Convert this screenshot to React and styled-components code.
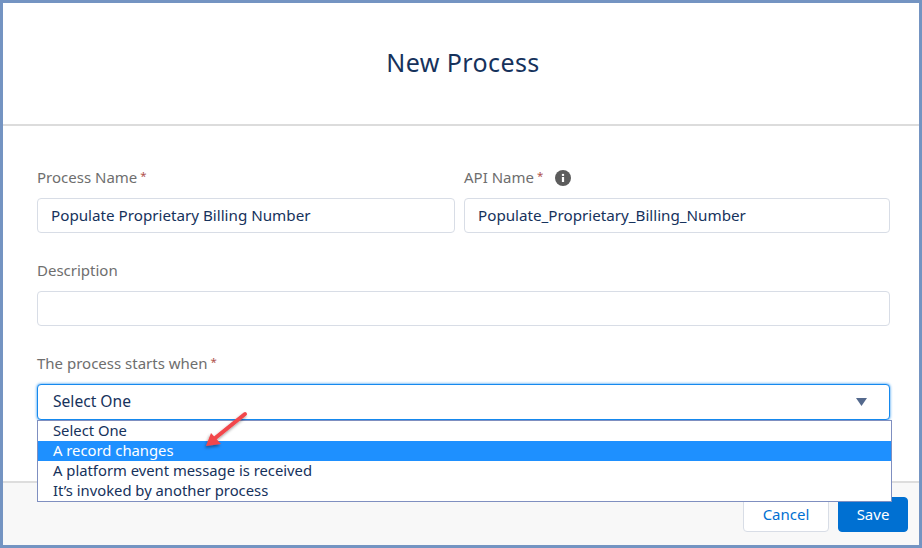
import React from 'react';
import styled, { createGlobalStyle } from 'styled-components';

const Global = createGlobalStyle`
  html, body { margin: 0; padding: 0; background: #7494c4; }
  body { font-family: "Noto Sans", "Open Sans", sans-serif; }
`;
const Frame = styled.div`
  width: 922px; height: 548px; box-sizing: border-box;
  border: 3px solid #7494c2; background: #fff;
  display: flex; flex-direction: column; position: relative; overflow: hidden;
`;
const Header = styled.header`
  height: 123px; flex: none; box-sizing: border-box; border-bottom: 2px solid #dcdcdc;
  display: flex; align-items: center; justify-content: center;
`;
const Title = styled.h1`
  margin: 0 0 3px 4px; font-size: 25px; font-weight: 400; color: #16325c; letter-spacing: 0.4px;
`;
const Body = styled.main`
  height: 355px; flex: none; box-sizing: border-box; padding: 41px 29px 0 34px;
  display: flex; flex-direction: column; position: relative;
`;
const Row = styled.div`
  display: grid; grid-template-columns: 418px 426px; column-gap: 9px; margin-bottom: 27px;
`;
const Field = styled.div`
  display: flex; flex-direction: column;
  margin-top: ${p => p.$gap || 0}px;
`;
const Label = styled.label`
  display: flex; align-items: center; height: 20px; margin-bottom: 11px;
  font-size: 15px; color: #6e6e6e;
`;
const Star = styled.span`
  color: #b0524e; margin-left: 3px; font-size: 11.5px; align-self: flex-start; line-height: 17px;
`;
const InfoIcon = styled.svg`
  width: 16px; height: 16px; margin: 2px 0 0 12px;
`;
const Input = styled.div`
  height: 35px; box-sizing: border-box; border: 1px solid #d8dde6; border-radius: 4px;
  padding: 0 13px 2px; display: flex; align-items: center; font-size: 15.2px; color: #16325c; background: #fff;
`;
const Select = styled(Input)`
  height: 36px; padding: 0 15px 2px; border-color: #1589ee; justify-content: space-between;
  box-shadow: 0 0 3px #1589ee; font-size: 15.6px;
`;
const Caret = styled.svg`
  width: 11px; height: 8px; margin: 2px 7px 0 0;
`;
const List = styled.ul`
  position: absolute; left: 34px; top: 294px; width: 855px; height: 82px; box-sizing: border-box;
  margin: 0; padding: 0; list-style: none; background: #fff; border: 1px solid #7f8fc0; z-index: 2;
`;
const Option = styled.li`
  height: 20px; line-height: 18px; padding-left: 15px; font-size: 14.8px;
  color: ${p => (p.$active ? '#fff' : '#16325c')};
  background: ${p => (p.$active ? '#1e90ff' : 'transparent')};
`;
const Footer = styled.footer`
  flex: 1; background: #f8f8f8; border-top: 2px solid #dddddd;
  display: flex; justify-content: flex-end; align-items: flex-start; gap: 9px; padding: 14px 11px 0 0;
`;
const Button = styled.button`
  height: 35px; box-sizing: border-box; border-radius: 4px; font: inherit; font-size: 15px; padding: 0 0 2px;
  width: ${p => (p.$primary ? '70px' : '86px')};
  color: ${p => (p.$primary ? '#fff' : '#0070d2')};
  background: ${p => (p.$primary ? '#0070d2' : '#fff')};
  border: 1px solid ${p => (p.$primary ? '#0070d2' : '#d8dde6')};
`;
const Arrow = styled.svg`
  position: absolute; left: 195px; top: 405px; width: 60px; height: 50px; z-index: 3; overflow: visible;
`;

export default function App() {
  return (
    <>
      <Global />
      <Frame>
        <Header><Title>New Process</Title></Header>
        <Body>
          <Row>
            <Field>
              <Label>Process Name<Star>*</Star></Label>
              <Input>Populate Proprietary Billing Number</Input>
            </Field>
            <Field>
              <Label>API Name<Star>*</Star>
                <InfoIcon viewBox="0 0 16 16">
                  <circle cx="8" cy="8" r="8" fill="#5c5c5c" />
                  <rect x="6.9" y="7" width="2.2" height="5" fill="#fff" />
                  <rect x="6.9" y="3.9" width="2.2" height="2" fill="#fff" />
                </InfoIcon>
              </Label>
              <Input>Populate_Proprietary_Billing_Number</Input>
            </Field>
          </Row>
          <Field>
            <Label>Description</Label>
            <Input />
          </Field>
          <Field $gap={27}>
            <Label>The process starts when<Star>*</Star></Label>
            <Select>Select One
              <Caret viewBox="0 0 11 8"><path d="M0 0h11L5.5 8z" fill="#54698d" /></Caret>
            </Select>
          </Field>
          <List>
            <Option>Select One</Option>
            <Option $active>A record changes</Option>
            <Option>A platform event message is received</Option>
            <Option>It’s invoked by another process</Option>
          </List>
        </Body>
        <Footer>
          <Button>Cancel</Button>
          <Button $primary>Save</Button>
        </Footer>
        <Arrow viewBox="0 0 60 50">
          <defs>
            <filter id="s" x="-30%" y="-30%" width="170%" height="170%">
              <feDropShadow dx="-1" dy="2" stdDeviation="1.5" floodColor="#000" floodOpacity="0.4" />
            </filter>
          </defs>
          <g filter="url(#s)">
            <path d="M47 6 L16 31" stroke="#f2474b" strokeWidth="4" strokeLinecap="round" fill="none" />
            <path d="M8 38 L13 25 L23 36 Z" fill="#f2474b" />
          </g>
        </Arrow>
      </Frame>
    </>
  );
}
